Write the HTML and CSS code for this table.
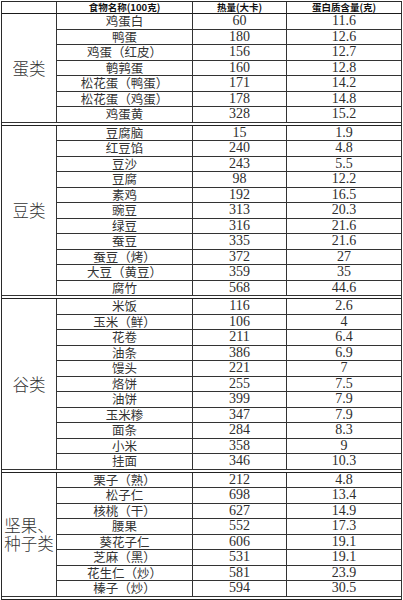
FILE: index.html
```html
<!DOCTYPE html>
<html lang="zh">
<head>
<meta charset="utf-8">
<link rel="stylesheet" href="styles.css">
</head>
<body>
<table class="tbl">
<colgroup><col class="c-cat"><col class="c-name"><col class="c-kcal"><col class="c-pro"></colgroup>
<thead>
<tr class="head"><th></th><th>食物名称(100克)</th><th>热量(大卡)</th><th>蛋白质含量(克)</th></tr>
</thead>
<tbody>
<tr><td class="cat" rowspan="7">蛋类</td><td class="name">鸡蛋白</td><td class="num">60</td><td class="num">11.6</td></tr>
<tr><td class="name">鸭蛋</td><td class="num">180</td><td class="num">12.6</td></tr>
<tr><td class="name">鸡蛋（红皮）</td><td class="num">156</td><td class="num">12.7</td></tr>
<tr><td class="name">鹌鹑蛋</td><td class="num">160</td><td class="num">12.8</td></tr>
<tr><td class="name">松花蛋（鸭蛋）</td><td class="num">171</td><td class="num">14.2</td></tr>
<tr><td class="name">松花蛋（鸡蛋）</td><td class="num">178</td><td class="num">14.8</td></tr>
<tr><td class="name">鸡蛋黄</td><td class="num">328</td><td class="num">15.2</td></tr>
<tr class="sep"><td colspan="4"></td></tr>

<tr><td class="cat" rowspan="11">豆类</td><td class="name">豆腐脑</td><td class="num">15</td><td class="num">1.9</td></tr>
<tr><td class="name">红豆馅</td><td class="num">240</td><td class="num">4.8</td></tr>
<tr><td class="name">豆沙</td><td class="num">243</td><td class="num">5.5</td></tr>
<tr><td class="name">豆腐</td><td class="num">98</td><td class="num">12.2</td></tr>
<tr><td class="name">素鸡</td><td class="num">192</td><td class="num">16.5</td></tr>
<tr><td class="name">豌豆</td><td class="num">313</td><td class="num">20.3</td></tr>
<tr><td class="name">绿豆</td><td class="num">316</td><td class="num">21.6</td></tr>
<tr><td class="name">蚕豆</td><td class="num">335</td><td class="num">21.6</td></tr>
<tr><td class="name">蚕豆（烤）</td><td class="num">372</td><td class="num">27</td></tr>
<tr><td class="name">大豆（黄豆）</td><td class="num">359</td><td class="num">35</td></tr>
<tr><td class="name">腐竹</td><td class="num">568</td><td class="num">44.6</td></tr>
<tr class="sep"><td colspan="4"></td></tr>

<tr><td class="cat" rowspan="11">谷类</td><td class="name">米饭</td><td class="num">116</td><td class="num">2.6</td></tr>
<tr><td class="name">玉米（鲜）</td><td class="num">106</td><td class="num">4</td></tr>
<tr><td class="name">花卷</td><td class="num">211</td><td class="num">6.4</td></tr>
<tr><td class="name">油条</td><td class="num">386</td><td class="num">6.9</td></tr>
<tr><td class="name">馒头</td><td class="num">221</td><td class="num">7</td></tr>
<tr><td class="name">烙饼</td><td class="num">255</td><td class="num">7.5</td></tr>
<tr><td class="name">油饼</td><td class="num">399</td><td class="num">7.9</td></tr>
<tr><td class="name">玉米糁</td><td class="num">347</td><td class="num">7.9</td></tr>
<tr><td class="name">面条</td><td class="num">284</td><td class="num">8.3</td></tr>
<tr><td class="name">小米</td><td class="num">358</td><td class="num">9</td></tr>
<tr><td class="name">挂面</td><td class="num">346</td><td class="num">10.3</td></tr>
<tr class="sep"><td colspan="4"></td></tr>

<tr><td class="cat" rowspan="8">坚果、<br>种子类</td><td class="name">栗子（熟）</td><td class="num">212</td><td class="num">4.8</td></tr>
<tr><td class="name">松子仁</td><td class="num">698</td><td class="num">13.4</td></tr>
<tr><td class="name">核桃（干）</td><td class="num">627</td><td class="num">14.9</td></tr>
<tr><td class="name">腰果</td><td class="num">552</td><td class="num">17.3</td></tr>
<tr><td class="name">葵花子仁</td><td class="num">606</td><td class="num">19.1</td></tr>
<tr><td class="name">芝麻（黑）</td><td class="num">531</td><td class="num">19.1</td></tr>
<tr><td class="name">花生仁（炒）</td><td class="num">581</td><td class="num">23.9</td></tr>
<tr><td class="name">榛子（炒）</td><td class="num">594</td><td class="num">30.5</td></tr>
<tr class="sep"><td colspan="4"></td></tr>
</tbody>
</table>
</body>
</html>
```

FILE: styles.css
```css
html, body {
  margin: 0;
  padding: 0;
  background: #fff;
}
body {
  font-family: "Liberation Serif", "Noto Sans CJK SC", serif;
  color: #333;
}
.tbl {
  margin: 1px 0 0 1px;
  width: 400px;
  table-layout: fixed;
  border-collapse: separate;
  border-spacing: 0;
  border-top: 1px solid #2a2a2a;
  border-left: 1px solid #2a2a2a;
}
.c-cat { width: 55px; }
.c-name { width: 136px; }
.c-kcal { width: 94px; }
.c-pro { width: 115px; }
.tbl th,
.tbl td {
  box-sizing: border-box;
  padding: 0;
  border-right: 1px solid #333;
  border-bottom: 1px solid #333;
  text-align: center;
  vertical-align: middle;
  white-space: nowrap;
}
.head th {
  height: 12px;
  font-family: "Noto Sans CJK SC", sans-serif;
  font-weight: 700;
  font-size: 9.5px;
  line-height: 11px;
  color: #111;
  border-bottom-color: #1a1a1a;
}
.tbl tbody tr {
  height: 15.5px;
}
.tbl td {
  height: 15.5px;
  line-height: 14px;
}
.name {
  font-family: "Noto Sans CJK SC", sans-serif;
  font-weight: 400;
  font-size: 12.5px;
  color: #333;
}
.num {
  font-family: "Liberation Serif", serif;
  font-size: 14px;
  color: #2e2e2e;
}
.tbl td.cat {
  font-family: "Noto Sans CJK SC", sans-serif;
  font-weight: 300;
  font-size: 16.5px;
  line-height: 18px;
  color: #333;
  white-space: normal;
}
.tbl tr.sep {
  height: 3px;
}
.tbl tr.sep td {
  height: 3px;
  line-height: 0;
  font-size: 0;
  border-bottom: 1px solid #222;
}
```
